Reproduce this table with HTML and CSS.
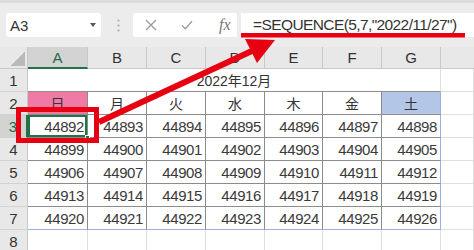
FILE: index.html
```html
<!DOCTYPE html>
<html lang="ja">
<head>
<meta charset="utf-8">
<link rel="stylesheet" href="styles.css">
</head>
<body>
<div class="app">
  <div class="toolbar">
    <div class="namebox"><span class="ref">A3</span><svg class="caret" width="6" height="4" viewBox="0 0 6 4"><path d="M0 0H6L3 4Z" fill="#555"/></svg></div>
    <div class="sep"><svg width="3" height="13" viewBox="0 0 3 13"><circle cx="1.5" cy="1.5" r="1.1" fill="#aaa"/><circle cx="1.5" cy="6.5" r="1.1" fill="#aaa"/><circle cx="1.5" cy="11.5" r="1.1" fill="#aaa"/></svg></div>
    <div class="fbtns">
      <svg class="ico" width="12" height="12" viewBox="0 0 12 12"><path d="M1 1L11 11M11 1L1 11" stroke="#9a9a9a" stroke-width="1.3" fill="none"/></svg>
      <svg class="ico" width="12" height="10" viewBox="0 0 12 10"><path d="M1 5.5L4.3 8.8L11 1.2" stroke="#9a9a9a" stroke-width="1.3" fill="none"/></svg>
      <span class="fx">fx</span>
    </div>
    <div class="finput">=SEQUENCE(5,7,"2022/11/27")</div>
  </div>
  <div class="sheet">
    <div class="corner"></div>
    <div class="ch sel">A</div><div class="ch">B</div><div class="ch">C</div><div class="ch">D</div><div class="ch">E</div><div class="ch">F</div><div class="ch">G</div><div class="ch last"></div>

    <div class="rh">1</div><div class="c title">2022年12月</div><div class="c"></div>

    <div class="rh">2</div>
    <div class="t day sun">日</div><div class="t day">月</div><div class="t day">火</div><div class="t day">水</div><div class="t day">木</div><div class="t day">金</div><div class="t day sat redge">土</div><div class="c"></div>

    <div class="rh rsel">3</div>
    <div class="t n active">44892<span class="handle"></span></div><div class="t n">44893</div><div class="t n">44894</div><div class="t n">44895</div><div class="t n">44896</div><div class="t n">44897</div><div class="t n redge">44898</div><div class="c"></div>

    <div class="rh">4</div>
    <div class="t n">44899</div><div class="t n">44900</div><div class="t n">44901</div><div class="t n">44902</div><div class="t n">44903</div><div class="t n">44904</div><div class="t n redge">44905</div><div class="c"></div>

    <div class="rh">5</div>
    <div class="t n">44906</div><div class="t n">44907</div><div class="t n">44908</div><div class="t n">44909</div><div class="t n">44910</div><div class="t n">44911</div><div class="t n redge">44912</div><div class="c"></div>

    <div class="rh">6</div>
    <div class="t n">44913</div><div class="t n">44914</div><div class="t n">44915</div><div class="t n">44916</div><div class="t n">44917</div><div class="t n">44918</div><div class="t n redge">44919</div><div class="c"></div>

    <div class="rh">7</div>
    <div class="t n bedge">44920</div><div class="t n bedge">44921</div><div class="t n bedge">44922</div><div class="t n bedge">44923</div><div class="t n bedge">44924</div><div class="t n bedge">44925</div><div class="t n redge bedge">44926</div><div class="c"></div>

    <div class="rh">8</div>
    <div class="c"></div><div class="c"></div><div class="c"></div><div class="c"></div><div class="c"></div><div class="c"></div><div class="c"></div><div class="c"></div>
  </div>
  <svg class="overlay" width="474" height="250" viewBox="0 0 474 250">
    <rect x="241" y="33" width="224" height="4.5" fill="#e60012"/>
    <rect x="18.5" y="109.5" width="78" height="31" fill="none" stroke="#e60012" stroke-width="5"/>
    <line x1="99" y1="122" x2="254" y2="50" stroke="#e60012" stroke-width="6"/>
    <polygon points="275,40 245,39 257,63" fill="#e60012"/>
  </svg>
</div>
</body>
</html>
```
FILE: styles.css
```css
* { box-sizing: border-box; }
html, body { margin: 0; padding: 0; }
body {
  width: 474px;
  height: 250px;
  overflow: hidden;
  background: #fff;
  font-family: "Liberation Sans", "Noto Sans CJK JP", sans-serif;
  color: #333;
}
.app { position: relative; width: 474px; height: 250px; overflow: hidden; }

.toolbar {
  height: 47px;
  background: #ececec;
  border-top: 3px solid #dcdcdc;
  display: flex;
  align-items: flex-start;
  padding: 10px 0 0 6px;
}
.namebox {
  width: 95px;
  height: 24px;
  background: #fff;
  border-radius: 3px;
  display: flex;
  align-items: center;
  justify-content: space-between;
  padding: 0 5px 0 4px;
}
.ref { font-size: 15px; color: #333; }
.sep {
  width: 32px;
  height: 24px;
  display: flex;
  align-items: center;
  justify-content: center;
  padding-left: 3px;
}
.fbtns {
  width: 104px;
  height: 24px;
  background: #fff;
  border-radius: 3px 0 0 3px;
  display: flex;
  align-items: center;
  padding-left: 12px;
  gap: 24px;
}
.fx {
  font-family: "Liberation Serif", serif;
  font-style: italic;
  font-size: 16px;
  color: #777;
  margin-left: 2px;
}
.finput {
  flex: 1;
  height: 24px;
  margin-left: 4px;
  background: #fff;
  padding-left: 12px;
  font-size: 15.5px;
  letter-spacing: -0.6px;
  line-height: 23px;
  color: #333;
  white-space: nowrap;
}

.sheet {
  display: grid;
  grid-template-columns: 28px 60px 59px 59px 59px 58px 59px 59px 33px;
  grid-template-rows: 22px repeat(8, 23px);
  font-size: 14px;
}
.corner {
  background: #e8e8e8 linear-gradient(135deg, transparent 55%, #b9b9b9 55%) no-repeat right 2px bottom 2px / 16px 16px;
  border-right: 1px solid #c8c8c8;
  border-bottom: 1px solid #c8c8c8;
}
.ch {
  background: #e8e8e8;
  border-right: 1px solid #c8c8c8;
  border-bottom: 1px solid #c8c8c8;
  display: flex;
  align-items: center;
  justify-content: center;
  font-size: 15px;
  color: #333;
}
.ch.sel {
  background: #d3d3d3;
  color: #1e6b45;
  border-bottom: 2px solid #217346;
}
.ch.last { border-right: none; }
.rh {
  background: #e8e8e8;
  border-right: 1px solid #c8c8c8;
  border-bottom: 1px solid #d2d2d2;
  display: flex;
  align-items: center;
  justify-content: center;
  font-size: 15px;
  color: #333;
}
.rh.rsel {
  background: #d3d3d3;
  color: #1e6b45;
  border-right: 2px solid #217346;
}
.c {
  border-right: 1px solid #dedede;
  border-bottom: 1px solid #dedede;
}
.title {
  grid-column: span 7;
  display: flex;
  align-items: center;
  justify-content: center;
  border-right: 1px solid #dedede;
  border-bottom: 1px solid #8c8c8c;
  font-size: 14px;
  color: #333;
}
.t {
  border-right: 1px solid #8c8c8c;
  border-bottom: 1px solid #8c8c8c;
  display: flex;
  align-items: center;
  color: #333;
}
.day { justify-content: center; font-family: "Noto Sans CJK JP", sans-serif; font-size: 14px; }
.n { justify-content: flex-end; padding-right: 3px; font-size: 15px; letter-spacing: -0.4px; color: #3a3a3a; }
.sun { background: #f07aa6; }
.sat { background: #b4c6e7; }
.redge { border-right-color: #9db0dd; }
.bedge { border-bottom-color: #9db0dd; }
.active {
  position: relative;
  box-shadow: inset 0 0 0 2px #217346;
}
.handle {
  position: absolute;
  right: -3px;
  bottom: -3px;
  width: 5px;
  height: 5px;
  background: #217346;
  border: 1px solid #fff;
}
.overlay { position: absolute; left: 0; top: 0; pointer-events: none; }
```
